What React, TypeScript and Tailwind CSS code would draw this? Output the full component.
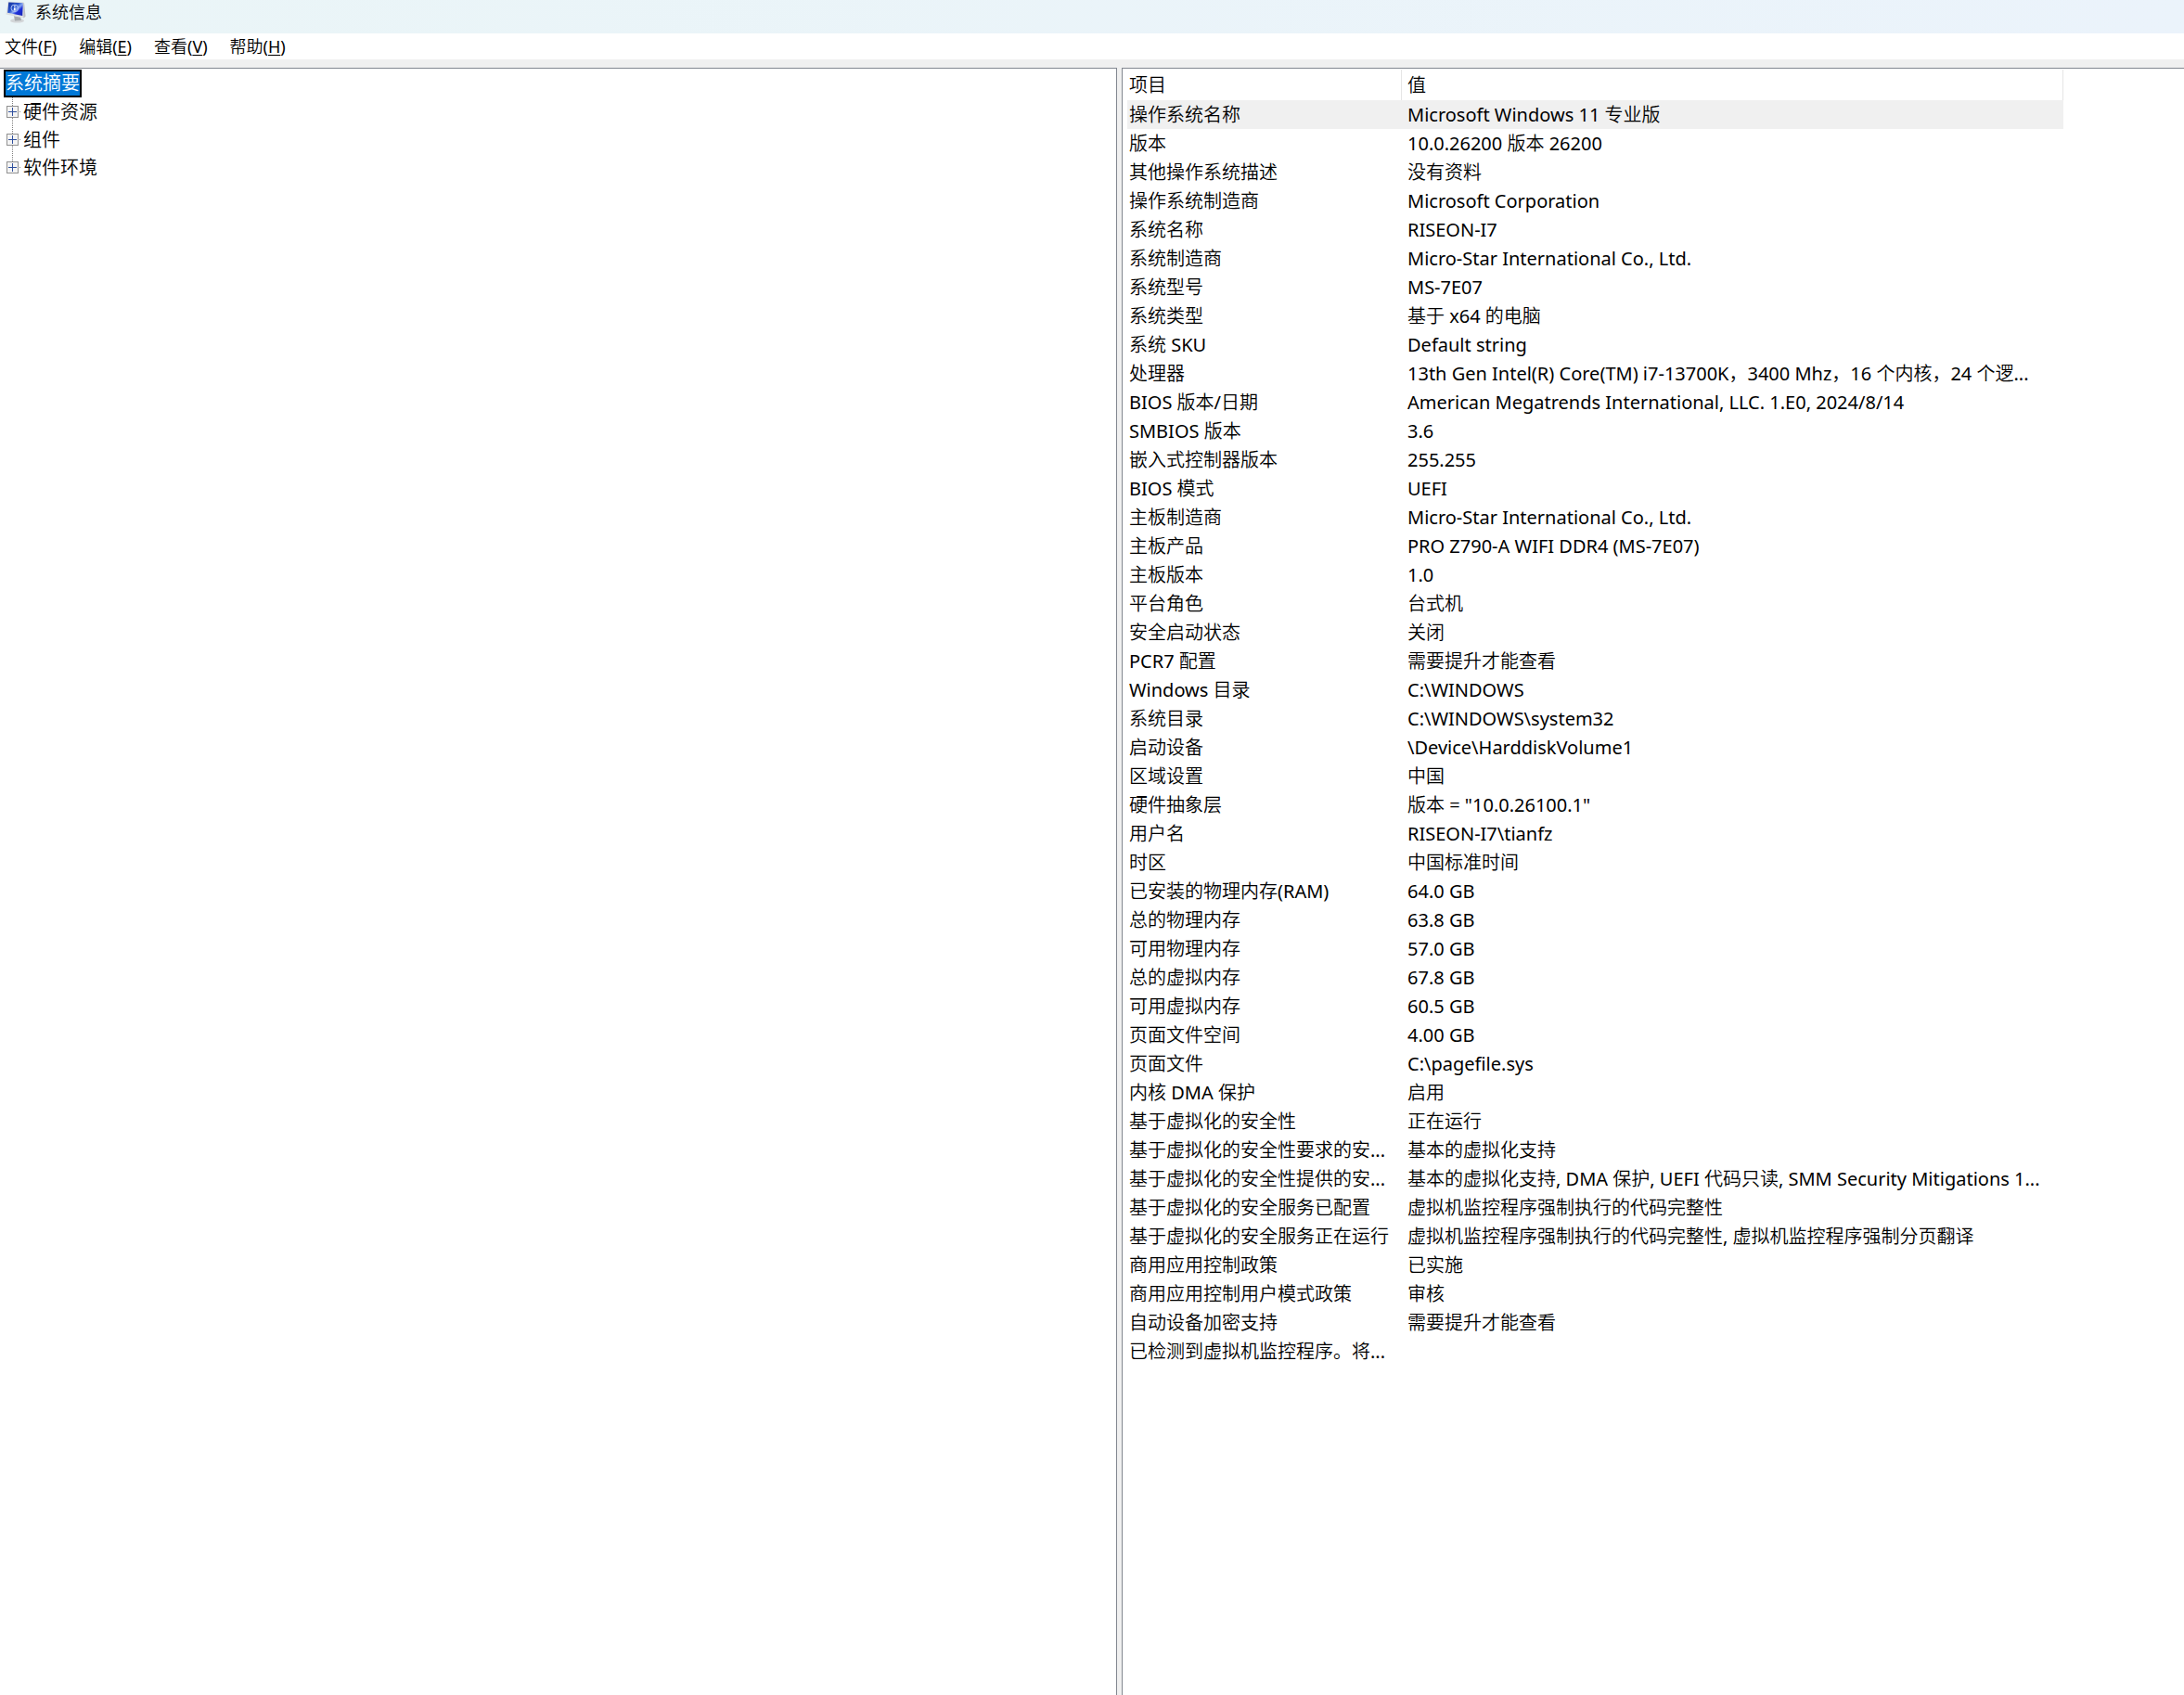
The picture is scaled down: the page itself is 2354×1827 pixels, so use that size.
import React from 'react';

const menus = [
  { label: '文件', key: 'F' },
  { label: '编辑', key: 'E' },
  { label: '查看', key: 'V' },
  { label: '帮助', key: 'H' },
];

const categories = ['硬件资源', '组件', '软件环境'];

const rows = [
  ['操作系统名称', 'Microsoft Windows 11 专业版'],
  ['版本', '10.0.26200 版本 26200'],
  ['其他操作系统描述', '没有资料'],
  ['操作系统制造商', 'Microsoft Corporation'],
  ['系统名称', 'RISEON-I7'],
  ['系统制造商', 'Micro-Star International Co., Ltd.'],
  ['系统型号', 'MS-7E07'],
  ['系统类型', '基于 x64 的电脑'],
  ['系统 SKU', 'Default string'],
  ['处理器', '13th Gen Intel(R) Core(TM) i7-13700K，3400 Mhz，16 个内核，24 个逻...'],
  ['BIOS 版本/日期', 'American Megatrends International, LLC. 1.E0, 2024/8/14'],
  ['SMBIOS 版本', '3.6'],
  ['嵌入式控制器版本', '255.255'],
  ['BIOS 模式', 'UEFI'],
  ['主板制造商', 'Micro-Star International Co., Ltd.'],
  ['主板产品', 'PRO Z790-A WIFI DDR4 (MS-7E07)'],
  ['主板版本', '1.0'],
  ['平台角色', '台式机'],
  ['安全启动状态', '关闭'],
  ['PCR7 配置', '需要提升才能查看'],
  ['Windows 目录', 'C:\\WINDOWS'],
  ['系统目录', 'C:\\WINDOWS\\system32'],
  ['启动设备', '\\Device\\HarddiskVolume1'],
  ['区域设置', '中国'],
  ['硬件抽象层', '版本 = "10.0.26100.1"'],
  ['用户名', 'RISEON-I7\\tianfz'],
  ['时区', '中国标准时间'],
  ['已安装的物理内存(RAM)', '64.0 GB'],
  ['总的物理内存', '63.8 GB'],
  ['可用物理内存', '57.0 GB'],
  ['总的虚拟内存', '67.8 GB'],
  ['可用虚拟内存', '60.5 GB'],
  ['页面文件空间', '4.00 GB'],
  ['页面文件', 'C:\\pagefile.sys'],
  ['内核 DMA 保护', '启用'],
  ['基于虚拟化的安全性', '正在运行'],
  ['基于虚拟化的安全性要求的安...', '基本的虚拟化支持'],
  ['基于虚拟化的安全性提供的安...', '基本的虚拟化支持, DMA 保护, UEFI 代码只读, SMM Security Mitigations 1...'],
  ['基于虚拟化的安全服务已配置', '虚拟机监控程序强制执行的代码完整性'],
  ['基于虚拟化的安全服务正在运行', '虚拟机监控程序强制执行的代码完整性, 虚拟机监控程序强制分页翻译'],
  ['商用应用控制政策', '已实施'],
  ['商用应用控制用户模式政策', '审核'],
  ['自动设备加密支持', '需要提升才能查看'],
  ['已检测到虚拟机监控程序。将...', ''],
];

const AppIcon = () => (
  <svg className="h-[26px] w-6" viewBox="0 0 24 26" aria-hidden="true">
    <defs>
      <linearGradient id="screen" x1="0" y1="0" x2="1" y2="1">
        <stop offset="0" stopColor="#12309c" />
        <stop offset="0.4" stopColor="#2a55cc" />
        <stop offset="0.55" stopColor="#86a6f2" />
        <stop offset="0.68" stopColor="#1c2fd8" />
        <stop offset="1" stopColor="#1624b4" />
      </linearGradient>
    </defs>
    <ellipse cx="13.500" cy="22.300" rx="7.500" ry="2.300" fill="#d3d6d8" />
    <path d="M10 17l7 1 1 4-7 0.500z" fill="#a6a9ac" />
    <path d="M3.500 1.800L20.500 2.300 22.500 18 20.500 19.500 1.500 15.500z" fill="#dcdfe1" />
    <path d="M4.300 2.500L19.800 3.200 19.200 17 3.200 13.800z" fill="url(#screen)" />
    <path d="M20.300 3l0.800 0.600 1.400 14-2 1.800z" fill="#bcc0c4" />
    <circle cx="10.800" cy="8.800" r="3.800" fill="none" stroke="#a9bff2" strokeWidth="1" />
    <path d="M10.800 8.300v3M10.800 6v1.200" stroke="#fff" strokeWidth="1.500" />
  </svg>
);

const ExpandIcon = () => (
  <svg className="h-[13px] w-4 shrink-0" viewBox="0 0 16 13" aria-hidden="true">
    <rect x="0.500" y="0.500" width="12" height="12" fill="#f4f4f4" stroke="#919191" />
    <path d="M2 6.500h9M6.500 2v9" stroke="#2f4f9d" strokeWidth="1" />
    <path d="M14 6.500h1" stroke="#8c8c8c" strokeWidth="1" />
  </svg>
);

const MenuBar = () => (
  <nav className="flex h-7 items-center gap-6 bg-white px-[5px]">
    {menus.map((menu) => (
      <button key={menu.key} type="button" className="text-[18px] leading-7 whitespace-nowrap">
        {menu.label}(<span className="underline underline-offset-2">{menu.key}</span>)
      </button>
    ))}
  </nav>
);

const CategoryTree = () => (
  <aside className="border-t border-r border-[#828790] bg-white pt-px pl-1 text-[20px]">
    <button
      type="button"
      className="block h-[30px] border-2 border-black bg-[#0078d7] leading-[26px] text-white"
    >
      系统摘要
    </button>
    <ul className="bg-[linear-gradient(#808080_50%,transparent_50%)] bg-[length:1px_2px] bg-[position:9px_0] bg-repeat-y">
      {categories.map((name) => (
        <li key={name} className="last:bg-[linear-gradient(white,white)] last:bg-[length:100%_15px] last:bg-bottom last:bg-no-repeat">
          <button type="button" className="flex h-[30px] items-center gap-[2px] pt-px pl-[3px] leading-[30px]">
            <ExpandIcon />
            {name}
          </button>
        </li>
      ))}
    </ul>
  </aside>
);

const DetailTable = () => (
  <main className="border-t border-l border-[#828790] bg-white pt-px pl-[5px]">
    <table className="w-[1009px] table-fixed border-collapse text-left text-[20px] whitespace-nowrap">
      <colgroup>
        <col className="w-[300px]" />
        <col />
      </colgroup>
      <thead>
        <tr className="h-[33px]">
          <th className="p-0 pl-[2px] font-normal leading-8">
            <div className="mr-1 border-r border-[#e5e5e5] pt-px">项目</div>
          </th>
          <th className="border-r border-[#e5e5e5] p-0 pt-px pl-[2px] font-normal leading-8">值</th>
        </tr>
      </thead>
      <tbody>
        {rows.map(([item, value], i) => (
          <tr key={item} className={i === 0 ? 'h-[31px] bg-[#f0f0f0]' : 'h-[31px]'}>
            <td className="p-0 pl-[2px] leading-[31px]">{item}</td>
            <td className="p-0 pl-[2px] leading-[31px]">{value}</td>
          </tr>
        ))}
      </tbody>
    </table>
  </main>
);

const App = () => {
  return (
    <div className="flex min-h-screen flex-col bg-[#f0f0f0] font-['Noto_Sans','Noto_Sans_CJK_SC_DemiLight','Noto_Sans_CJK_SC',sans-serif] text-black">
      <header className="flex h-9 items-start gap-[9px] bg-linear-to-r from-[#eaf5f7] to-[#ebf3fb] pl-[5px]">
        <AppIcon />
        <h1 className="text-[18px] leading-[26px]">系统信息</h1>
      </header>
      <MenuBar />
      <div className="mt-[9px] grid grow grid-cols-[1204fr_1145fr] gap-[5px]">
        <CategoryTree />
        <DetailTable />
      </div>
    </div>
  );
};

export default App;
